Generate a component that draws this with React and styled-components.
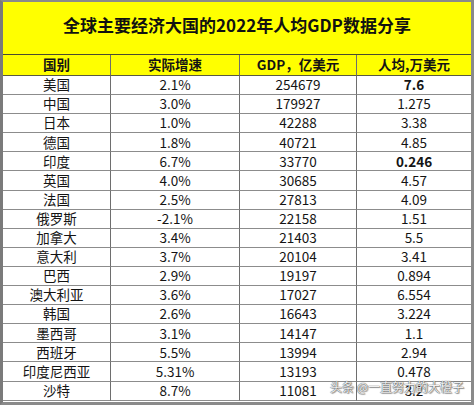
import { Fragment } from 'react';
import styled, { createGlobalStyle } from 'styled-components';

const GlobalStyle = createGlobalStyle`
    html, body {
        margin: 0;
        padding: 0;
        background: #ffffff;
    }
    body {
        font-family: "Noto Sans CJK SC", "Noto Sans", sans-serif;
    }
`

const Sheet = styled.div`
    position: relative;
    width: 474px;
    height: 405px;
    box-sizing: border-box;
    border-left: 3px solid #7a7a7a;
    border-right: 3px solid #8a8a8a;
    border-top: 2px solid #8a8a8a;
    border-bottom: 3px solid #8a8a8a;
    background: #ffffff;
    overflow: hidden;
`

const Title = styled.div`
    height: 53px;
    box-sizing: border-box;
    background: #ffff00;
    border-bottom: 1px solid #4a4a30;
    display: flex;
    justify-content: center;
    padding-top: 10px;
    font-size: 17px;
    font-weight: 700;
    color: #111;
`

const Grid = styled.div`
    display: grid;
    grid-template-columns: 108px 129px 117px 1fr;
`

const Cell = styled.div`
    height: ${p => (p.$head ? '21px' : '19.1px')};
    box-sizing: border-box;
    display: flex;
    align-items: center;
    justify-content: center;
    background: ${p => (p.$head ? '#ffff00' : '#ffffff')};
    border-right: ${p => (p.$last ? 'none' : '1px solid #6e6e6e')};
    border-bottom: 1px solid ${p => (p.$head ? '#5a5a40' : '#8c8c8c')};
    font-size: 13.5px;
    font-weight: ${p => (p.$bold || p.$head ? 700 : 400)};
    color: #141414;
    line-height: 1;
    white-space: nowrap;
`

const Watermark = styled.div`
    position: absolute;
    right: 7px;
    bottom: 7px;
    font-size: 12px;
    color: rgba(255, 255, 255, 0.92);
    text-shadow: 0 0 1px #555, 0 0 1px #555, 1px 1px 1px rgba(0, 0, 0, 0.4);
`

const heads = ['国别', '实际增速', 'GDP，亿美元', '人均,万美元']

const rows = [
    ['美国', '2.1%', '254679', '7.6', true],
    ['中国', '3.0%', '179927', '1.275'],
    ['日本', '1.0%', '42288', '3.38'],
    ['德国', '1.8%', '40721', '4.85'],
    ['印度', '6.7%', '33770', '0.246', true],
    ['英国', '4.0%', '30685', '4.57'],
    ['法国', '2.5%', '27813', '4.09'],
    ['俄罗斯', '-2.1%', '22158', '1.51'],
    ['加拿大', '3.4%', '21403', '5.5'],
    ['意大利', '3.7%', '20104', '3.41'],
    ['巴西', '2.9%', '19197', '0.894'],
    ['澳大利亚', '3.6%', '17027', '6.554'],
    ['韩国', '2.6%', '16643', '3.224'],
    ['墨西哥', '3.1%', '14147', '1.1'],
    ['西班牙', '5.5%', '13994', '2.94'],
    ['印度尼西亚', '5.31%', '13193', '0.478'],
    ['沙特', '8.7%', '11081', '3.2'],
]

function App() {
    return (
        <>
            <GlobalStyle />
            <Sheet>
                <Title>全球主要经济大国的2022年人均GDP数据分享</Title>
                <Grid>
                    {heads.map((h, i) => (
                        <Cell key={h} $head $last={i === 3}>{h}</Cell>
                    ))}
                    {rows.map(r => (
                        <Fragment key={r[0]}>
                            <Cell>{r[0]}</Cell>
                            <Cell>{r[1]}</Cell>
                            <Cell>{r[2]}</Cell>
                            <Cell $last $bold={r[4]}>{r[3]}</Cell>
                        </Fragment>
                    ))}
                </Grid>
                <Watermark>头条 @一直努力的大橙子</Watermark>
            </Sheet>
        </>
    )
}

export default App;
